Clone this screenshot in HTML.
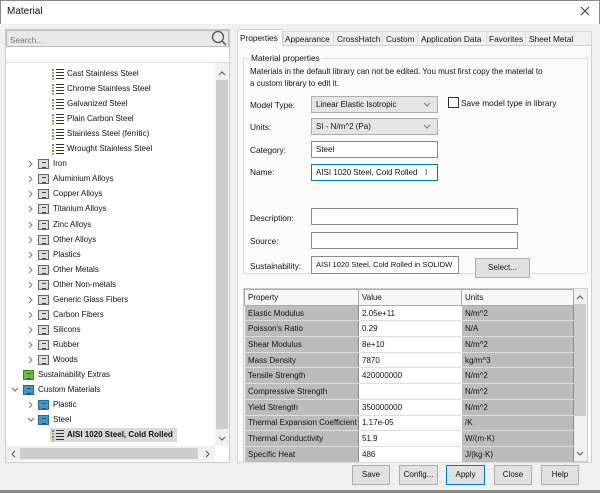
<!DOCTYPE html>
<html><head><meta charset="utf-8"><style>
*{box-sizing:border-box;margin:0;padding:0}
body{width:600px;height:493px;background:#f0f0f0;font-family:"Liberation Sans",sans-serif;font-size:8.3px;color:#111;position:relative;overflow:hidden}
.a{position:absolute;white-space:nowrap}
.ti{position:absolute;left:0;top:0;width:600px;height:24px;background:#fff;border:1px solid #888;border-bottom:none}
.row{position:absolute;height:15px;line-height:15px;white-space:nowrap;font-size:8px}
.chev{position:absolute}
.fold{position:absolute;width:11px;height:10px;border:1px solid #666;background:#ddd}
.fold:after{content:"";position:absolute;left:3px;top:2px;width:4px;height:4px;border-top:1px solid #444;border-bottom:1px solid #444}
.fold.b{background:#3a9ad0;border-color:#1d6b98}
.fold.g{background:#6cbf3b;border-color:#3d8a1a}
.leaf{position:absolute;width:11px;height:10px}
.leaf i{position:absolute;left:4px;width:8px;height:1px;background:#333}
.leaf b{position:absolute;left:0;width:2px;height:2px;background:#4a8fd0}
.inp{position:absolute;background:#fff;border:1px solid #8a8a8a;height:17px;line-height:15px;padding-left:4px;font-size:8px;overflow:hidden}
.sel{position:absolute;background:#e5e5e5;border:1px solid #adadad;height:17px;line-height:15px;padding-left:4px;font-size:8px}
.btn{position:absolute;background:#e1e1e1;border:1px solid #adadad;height:20px;line-height:18px;text-align:center;font-size:8px}
table{position:absolute;left:244px;top:289px;border-collapse:collapse;font-size:8px;table-layout:fixed}
td{height:15.7px;border:1px solid #fff;border-bottom:1px solid #ddd;padding-left:3px;white-space:nowrap;overflow:hidden}
td.p,td.u{background:#bcbcbc;border-right:1px solid #888}
td.v{background:#fff}
tr.h td{background:#f7f7f7;border:1px solid #aaa}
</style></head><body>
<div class="ti"></div>
<div class="a" style="left:7px;top:6px;font-size:10px">Material</div>
<svg class="a" style="left:580px;top:6px" width="10" height="10"><path d="M1 1L9 9M9 1L1 9" stroke="#444" stroke-width="1.2"/></svg>

<!-- left panel -->
<div class="a" style="left:5px;top:29px;width:225px;height:434px;border:1px solid #ccc;background:#fff"></div>
<div class="a" style="left:6px;top:30px;width:223px;height:17px;background:#e8e8e8;border:1px solid #bbb"></div>
<div class="a" style="left:10px;top:35px;color:#777">Search...</div>
<svg class="a" style="left:210px;top:30px" width="18" height="17"><circle cx="8" cy="7" r="5.5" fill="none" stroke="#555" stroke-width="1.3"/><line x1="12" y1="11" x2="16" y2="15" stroke="#555" stroke-width="1.5"/></svg>
<div class="a" style="left:6px;top:62px;width:223px;height:1px;background:#ddd"></div>
<div class="a" style="left:215px;top:63px;width:14px;height:383px;background:#f0f0f0"></div>
<div class="a" style="left:216px;top:80px;width:12px;height:349px;background:#cdcdcd"></div>
<svg class="a" style="left:218px;top:70px" width="8" height="6"><path d="M1 5L4 2L7 5" fill="none" stroke="#555"/></svg>
<svg class="a" style="left:218px;top:436px" width="8" height="6"><path d="M1 1L4 4L7 1" fill="none" stroke="#555"/></svg>
<div class="a" style="left:6px;top:446px;width:209px;height:15px;background:#f0f0f0"></div>
<div class="a" style="left:20px;top:448px;width:178px;height:11px;background:#cdcdcd"></div>
<svg class="a" style="left:10px;top:450px" width="6" height="8"><path d="M5 1L2 4L5 7" fill="none" stroke="#555"/></svg>
<svg class="a" style="left:205px;top:450px" width="6" height="8"><path d="M1 1L4 4L1 7" fill="none" stroke="#555"/></svg>

<div id="tree"></div>
<script>
var items=[
[2,"Cast Stainless Steel"],[2,"Chrome Stainless Steel"],[2,"Galvanized Steel"],[2,"Plain Carbon Steel"],[2,"Stainless Steel (ferritic)"],[2,"Wrought Stainless Steel"],
[1,"Iron"],[1,"Aluminium Alloys"],[1,"Copper Alloys"],[1,"Titanium Alloys"],[1,"Zinc Alloys"],[1,"Other Alloys"],[1,"Plastics"],[1,"Other Metals"],[1,"Other Non-metals"],[1,"Generic Glass Fibers"],[1,"Carbon Fibers"],[1,"Silicons"],[1,"Rubber"],[1,"Woods"],
[0,"Sustainability Extras","g",""],[0,"Custom Materials","b","v"],[1,"Plastic","b"],[1,"Steel","b","v"],[3,"AISI 1020 Steel, Cold Rolled"]];
var h="";
function leaf(y){return '<div class="leaf" style="left:52px;top:'+(y+3)+'px"><i style="top:0"></i><i style="top:3px"></i><i style="top:6px"></i><i style="top:9px"></i><b style="top:0"></b><b style="top:3px;background:#e0a800"></b><b style="top:6px"></b><b style="top:9px;background:#e0a800"></b></div>';}
function chev(x,y,down){return down?'<svg class="chev" style="left:'+(x-1)+'px;top:'+(y+5)+'px" width="8" height="6"><path d="M1 1L4 4L7 1" fill="none" stroke="#666"/></svg>':'<svg class="chev" style="left:'+x+'px;top:'+(y+4)+'px" width="6" height="8"><path d="M1 1L4 4L1 7" fill="none" stroke="#777"/></svg>';}
items.forEach(function(it,i){
 var y=66+i*15.05, lv=it[0];
 if(lv==2||lv==3){
  if(lv==3)h+='<div class="a" style="left:50px;top:'+(y+1)+'px;width:127px;height:14px;background:#d9d9d9"></div>';
  h+=leaf(y);
  h+='<div class="row" style="left:67px;top:'+y+'px;'+(lv==3?'font-weight:bold':'')+'">'+it[1]+'</div>';
 } else if(lv==1){
  h+=chev(28,y,it[3]=="v");
  h+='<div class="fold '+(it[2]||'')+'" style="left:38px;top:'+(y+3)+'px"></div>';
  h+='<div class="row" style="left:53px;top:'+y+'px">'+it[1]+'</div>';
 } else {
  if(it[3]=="v")h+=chev(12,y,true);
  h+='<div class="fold '+it[2]+'" style="left:23px;top:'+(y+3)+'px"></div>';
  h+='<div class="row" style="left:38px;top:'+y+'px">'+it[1]+'</div>';
 }
});
document.getElementById("tree").innerHTML=h;
</script>

<!-- tabs -->
<div class="a" style="left:237px;top:45px;width:355px;height:418px;border:1px solid #d0d0d0;background:#fbfbfb"></div>
<div class="a" style="left:237px;top:29px;width:46px;height:17px;background:#fbfbfb;border:1px solid #d0d0d0;border-bottom:none"></div>
<div class="a" style="left:240px;top:33px">Properties</div>
<div class="a" style="left:283px;top:31px;width:309px;height:14px;border:1px solid #d9d9d9;border-bottom:none;background:#f0f0f0"></div>
<div class="a" style="left:285px;top:34px">Appearance</div>
<div class="a" style="left:333px;top:31px;width:1px;height:14px;background:#d9d9d9"></div>
<div class="a" style="left:337px;top:34px">CrossHatch</div>
<div class="a" style="left:382px;top:31px;width:1px;height:14px;background:#d9d9d9"></div>
<div class="a" style="left:386px;top:34px">Custom</div>
<div class="a" style="left:417px;top:31px;width:1px;height:14px;background:#d9d9d9"></div>
<div class="a" style="left:421px;top:34px">Application Data</div>
<div class="a" style="left:486px;top:31px;width:1px;height:14px;background:#d9d9d9"></div>
<div class="a" style="left:489px;top:34px">Favorites</div>
<div class="a" style="left:525px;top:31px;width:1px;height:14px;background:#d9d9d9"></div>
<div class="a" style="left:529px;top:34px">Sheet Metal</div>

<!-- group -->
<div class="a" style="left:243px;top:58px;width:345px;height:216px;border:1px solid #ddd"></div>
<div class="a" style="left:249px;top:53px;background:#fbfbfb;padding:0 2px">Material properties</div>
<div class="a" style="left:250px;top:66px;line-height:12px;font-size:8px">Materials in the default library can not be edited. You must first copy the material to<br>a custom library to edit it.</div>

<div class="a" style="left:250px;top:100px">Model Type:</div>
<div class="sel" style="left:311px;top:96px;width:127px">Linear Elastic Isotropic</div>
<svg class="a" style="left:423px;top:102px" width="8" height="6"><path d="M1 1L4 4L7 1" fill="none" stroke="#777"/></svg>
<div class="a" style="left:448px;top:97px;width:11px;height:11px;border:1px solid #333;background:#fff"></div>
<div class="a" style="left:461px;top:98px">Save model type in library</div>
<div class="a" style="left:250px;top:122px">Units:</div>
<div class="sel" style="left:311px;top:118px;width:127px">SI - N/m^2 (Pa)</div>
<svg class="a" style="left:423px;top:124px" width="8" height="6"><path d="M1 1L4 4L7 1" fill="none" stroke="#777"/></svg>
<div class="a" style="left:250px;top:145px">Category:</div>
<div class="inp" style="left:311px;top:141px;width:127px">Steel</div>
<div class="a" style="left:250px;top:167px">Name:</div>
<div class="inp" style="left:311px;top:164px;width:127px;border-color:#0078d7">AISI 1020 Steel, Cold Rolled<span style="position:absolute;left:113px;top:0;color:#333">I</span></div>
<div class="a" style="left:250px;top:213px">Description:</div>
<div class="inp" style="left:311px;top:208px;width:207px"></div>
<div class="a" style="left:250px;top:236px">Source:</div>
<div class="inp" style="left:311px;top:232px;width:207px"></div>
<div class="a" style="left:250px;top:261px">Sustainability:</div>
<div class="inp" style="left:311px;top:256px;width:148px;height:18px;font-size:7.6px">AISI 1020 Steel, Cold Rolled in SOLIDW</div>
<div class="btn" style="left:475px;top:258px;width:55px">Select...</div>

<!-- table -->
<div class="a" style="left:243px;top:288px;width:345px;height:174px;background:#f0f0f0;border:1px solid #ccc"></div>
<table>
<colgroup><col style="width:114px"><col style="width:103px"><col style="width:112px"></colgroup>
<tr class="h"><td>Property</td><td>Value</td><td>Units</td></tr>
<tr><td class="p">Elastic Modulus</td><td class="v">2.05e+11</td><td class="u">N/m^2</td></tr>
<tr><td class="p">Poisson's Ratio</td><td class="v">0.29</td><td class="u">N/A</td></tr>
<tr><td class="p">Shear Modulus</td><td class="v">8e+10</td><td class="u">N/m^2</td></tr>
<tr><td class="p">Mass Density</td><td class="v">7870</td><td class="u">kg/m^3</td></tr>
<tr><td class="p">Tensile Strength</td><td class="v">420000000</td><td class="u">N/m^2</td></tr>
<tr><td class="p">Compressive Strength</td><td class="v"></td><td class="u">N/m^2</td></tr>
<tr><td class="p">Yield Strength</td><td class="v">350000000</td><td class="u">N/m^2</td></tr>
<tr><td class="p">Thermal Expansion Coefficient</td><td class="v">1.17e-05</td><td class="u">/K</td></tr>
<tr><td class="p">Thermal Conductivity</td><td class="v">51.9</td><td class="u">W/(m·K)</td></tr>
<tr><td class="p">Specific Heat</td><td class="v">486</td><td class="u">J/(kg·K)</td></tr>
</table>
<div class="a" style="left:574px;top:304px;width:12px;height:112px;background:#cdcdcd"></div>
<svg class="a" style="left:576px;top:294px" width="8" height="6"><path d="M1 5L4 2L7 5" fill="none" stroke="#555"/></svg>
<svg class="a" style="left:576px;top:451px" width="8" height="6"><path d="M1 1L4 4L7 1" fill="none" stroke="#555"/></svg>

<!-- buttons -->
<div class="btn" style="left:352px;top:465px;width:38px">Save</div>
<div class="btn" style="left:399px;top:465px;width:39px">Config...</div>
<div class="btn" style="left:446px;top:465px;width:39px;border:1px solid #0078d7">Apply</div>
<div class="btn" style="left:494px;top:465px;width:38px">Close</div>
<div class="btn" style="left:541px;top:465px;width:38px">Help</div>
<div class="a" style="left:0;top:490px;width:600px;height:3px;background:#888"></div>
</body></html>
